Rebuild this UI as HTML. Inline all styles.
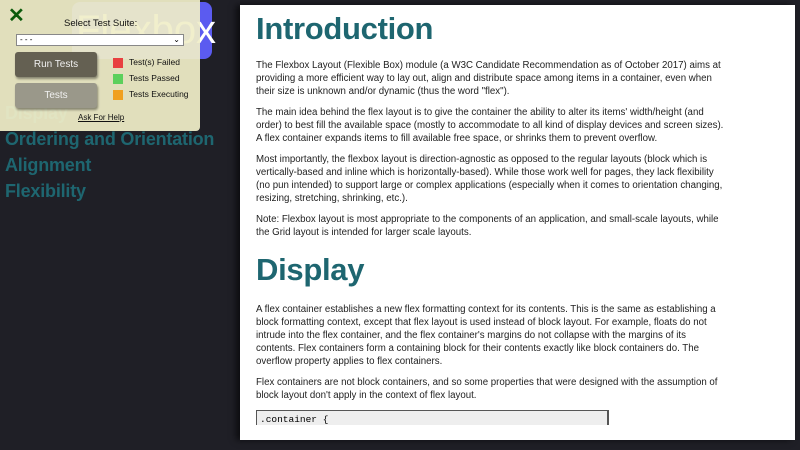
<!DOCTYPE html>
<html><head><meta charset="utf-8"><style>
*{margin:0;padding:0;box-sizing:border-box}
body{width:800px;height:450px;overflow:hidden;background:#1f1f26;font-family:"Liberation Sans",sans-serif;position:relative}
.logo{position:absolute;left:72px;top:2px;width:140px;height:57px;background:#5b5bf0;border-radius:8px;color:#fff;font-size:40px;line-height:57px;padding-left:4px}
.nav{position:absolute;left:5px;top:100px;color:#1e6670;font-weight:bold;font-size:18px;line-height:26px;font-family:"Liberation Sans",sans-serif;letter-spacing:-0.2px}
.main{position:absolute;left:240px;top:5px;width:555px;height:435px;background:#fff;padding-left:16px;box-shadow:-4px 0 6px rgba(0,0,0,.6)}
.inner{height:420px;overflow:hidden}
h1{color:#1e6670;font-family:"Liberation Sans",sans-serif;font-size:31px;font-weight:bold;letter-spacing:-0.3px;line-height:40px}
p{font-family:"Liberation Sans",sans-serif;font-size:9.7px;line-height:13px;color:#222;width:470px;margin:0 0 8px}
pre{border:1px solid #555;border-width:1px 2px 0 1px;background:#eee;width:353px;font-family:"Liberation Mono",monospace;font-size:9.5px;padding:3px 3px;height:30px;overflow:hidden;line-height:12px}
.panel{position:absolute;left:0;top:0;width:200px;height:131px;background:rgba(240,238,200,.93);border-radius:0 0 4px 0}
.x{position:absolute;left:8px;top:3px;color:#0a5a0a;font-size:20px;font-weight:bold}
.lbl{position:absolute;left:64px;top:18px;font-size:9.5px;color:#111}
.sel{position:absolute;left:16px;top:34px;width:168px;height:12px;background:#fff;border:1px solid #888;font-size:8px;padding-left:3px;line-height:10px}
.btn{position:absolute;left:15px;width:82px;height:25px;border-radius:3px;color:#f0f0f0;font-size:10px;text-align:center;line-height:25px;box-shadow:1px 2px 2px rgba(0,0,0,.4)}
.lg{position:absolute;left:113px;font-size:8.5px;color:#111}
.lg i{display:inline-block;width:10px;height:10px;margin-right:6px;vertical-align:middle}
</style></head><body>
<div class="logo">Flexbox</div>
<div class="nav"><div>Display</div><div>Ordering and Orientation</div><div>Alignment</div><div>Flexibility</div></div>
<div class="main"><div class="inner">
<h1 style="margin-top:4px;margin-bottom:10px">Introduction</h1>
<p>The Flexbox Layout (Flexible Box) module (a W3C Candidate Recommendation as of October 2017) aims at providing a more efficient way to lay out, align and distribute space among items in a container, even when their size is unknown and/or dynamic (thus the word "flex").</p>
<p>The main idea behind the flex layout is to give the container the ability to alter its items' width/height (and order) to best fill the available space (mostly to accommodate to all kind of display devices and screen sizes). A flex container expands items to fill available free space, or shrinks them to prevent overflow.</p>
<p>Most importantly, the flexbox layout is direction-agnostic as opposed to the regular layouts (block which is vertically-based and inline which is horizontally-based). While those work well for pages, they lack flexibility (no pun intended) to support large or complex applications (especially when it comes to orientation changing, resizing, stretching, shrinking, etc.).</p>
<p>Note: Flexbox layout is most appropriate to the components of an application, and small-scale layouts, while the Grid layout is intended for larger scale layouts.</p>
<h1 style="margin-top:11px;margin-bottom:13px">Display</h1>
<p>A flex container establishes a new flex formatting context for its contents. This is the same as establishing a block formatting context, except that flex layout is used instead of block layout. For example, floats do not intrude into the flex container, and the flex container's margins do not collapse with the margins of its contents. Flex containers form a containing block for their contents exactly like block containers do. The overflow property applies to flex containers.</p>
<p>Flex containers are not block containers, and so some properties that were designed with the assumption of block layout don't apply in the context of flex layout.</p>
<pre style="margin-top:8px">.container {
  display: flex;</pre>
</div></div>
<div class="panel">
<div class="x">✕</div>
<div class="lbl">Select Test Suite:</div>
<div class="sel">- - -<span style="float:right;padding-right:3px">⌄</span></div>
<div class="btn" style="top:52px;background:#646052">Run Tests</div>
<div class="btn" style="top:83px;background:#9a988a">Tests</div>
<div class="lg" style="top:57px"><i style="background:#e84040"></i>Test(s) Failed</div>
<div class="lg" style="top:73px"><i style="background:#5cd05c"></i>Tests Passed</div>
<div class="lg" style="top:89px"><i style="background:#f0a020"></i>Tests Executing</div>
<div style="position:absolute;left:78px;top:113px;font-size:8px;text-decoration:underline;color:#111">Ask For Help</div>
</div>
</body></html>
